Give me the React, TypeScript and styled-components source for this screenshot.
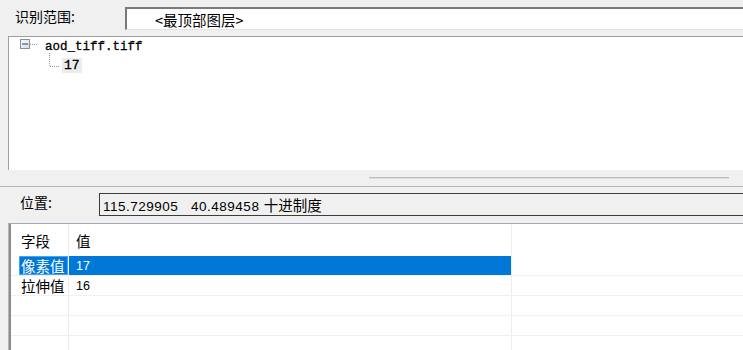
import React from "react";
import styled, { createGlobalStyle } from "styled-components";

const GlobalStyle = createGlobalStyle`
  html, body {
    margin: 0;
    padding: 0;
    background: #f0f0f0;
  }
  body {
    font-family: "Noto Sans CJK SC", "Noto Sans", sans-serif;
    color: #000;
  }
`;

const Window = styled.div`
  width: 743px;
  height: 350px;
  overflow: hidden;
  display: flex;
  flex-direction: column;
  background: #f0f0f0;
  & > * {
    flex-shrink: 0;
  }
`;

const TopBar = styled.div`
  height: 36px;
  box-sizing: border-box;
  display: flex;
  align-items: flex-start;
  padding: 7px 0 0 15px;
`;

const FieldLabel = styled.span<{ $w: number }>`
  width: ${(p) => p.$w}px;
  flex: none;
  font-size: 14px;
  line-height: 19px;
  white-space: nowrap;
`;

const Combo = styled.div`
  flex: 1;
  height: 23px;
  box-sizing: border-box;
  border-top: 2px solid #7a7a7a;
  border-left: 2px solid #7a7a7a;
  border-bottom: 1px solid #e3e3e3;
  background: #fff;
  padding-left: 28px;
  font-size: 14.5px;
  line-height: 21px;
  white-space: nowrap;
`;

const TreePanel = styled.div`
  margin-left: 8px;
  height: 134px;
  box-sizing: border-box;
  background: #fff;
  border-top: 1px solid #a0a0a0;
  border-left: 1px solid #a0a0a0;
  padding: 1px 0 0 11px;
`;

const TreeNode = styled.div<{ $indent?: number; $h: number }>`
  display: flex;
  align-items: flex-start;
  height: ${(p) => p.$h}px;
  padding-left: ${(p) => p.$indent ?? 0}px;
`;

const NodeText = styled.span`
  font-family: "Liberation Mono", "DejaVu Sans Mono", monospace;
  font-size: 12.5px;
  line-height: 18px;
  margin-left: 4px;
  white-space: nowrap;
  color: #000;
  -webkit-text-stroke: 0.3px #000;
`;

const LeafText = styled.span`
  font-family: "Liberation Mono", "DejaVu Sans Mono", monospace;
  font-size: 13px;
  line-height: 15px;
  height: 15px;
  margin-top: 5px;
  padding: 0 2px;
  background: #ececec;
  -webkit-text-stroke: 0.3px #000;
`;

const SplitterRow = styled.div`
  height: 16px;
  box-sizing: border-box;
  display: flex;
  justify-content: flex-end;
  align-items: flex-start;
  padding: 7px 14px 0 0;
`;

const Grip = styled.div`
  width: 360px;
  border-top: 1px solid #bdbdbd;
  border-bottom: 1px solid #dedede;
`;

const PositionRow = styled.div`
  height: 37px;
  box-sizing: border-box;
  border-top: 1px solid #b4b4b4;
  display: flex;
  align-items: flex-start;
  padding: 6px 0 0 20px;
`;

const ValueBox = styled.div`
  flex: 1;
  height: 23px;
  box-sizing: border-box;
  border: 1px solid #3c3c3c;
  border-right: none;
  background: #f0f0f0;
  padding-left: 3px;
  font-family: "Liberation Sans", "Noto Sans CJK SC", sans-serif;
  font-size: 13.5px;
  letter-spacing: 0.5px;
  line-height: 21px;
  white-space: pre;
`;

const Cjk = styled.span`
  font-family: "Noto Sans CJK SC", sans-serif;
  font-size: 14.5px;
  letter-spacing: 0;
`;

const Table = styled.div`
  flex: 1 1 auto !important;
  min-height: 0;
  overflow: hidden;
  margin-left: 8px;
  background: #fff;
  border-top: 1px solid #a0a8b8;
  border-left: 1px solid #b8b8b8;
  box-shadow: inset 2px 0 0 #8c8c8c;
  padding-left: 2px;
  display: flex;
  flex-direction: column;
`;

const Row = styled.div<{ $header?: boolean }>`
  flex-shrink: 0;
  display: grid;
  grid-template-columns: 8px 50px 443px 1fr;
  height: ${(p) => (p.$header ? 32 : 20)}px;
  box-sizing: border-box;
  border-bottom: ${(p) => (p.$header ? "none" : "1px solid #f0f0f0")};
`;

const Cell = styled.div<{ $sel?: boolean; $focus?: boolean; $num?: boolean; $last?: boolean }>`
  display: flex;
  align-items: center;
  border-right: ${(p) => (p.$last ? "none" : "1px solid #ededed")};
  background: ${(p) => (p.$sel ? "#0078d7" : "transparent")};
  color: ${(p) => (p.$sel ? "#fff" : "#000")};
  box-shadow: ${(p) => (p.$focus ? "inset 0 0 0 1px #4aa3ec" : "none")};
  padding-left: ${(p) => (p.$num ? 7 : 2)}px;
  font-family: ${(p) =>
    p.$num ? '"Liberation Sans", "Noto Sans CJK SC", sans-serif' : '"Noto Sans CJK SC", sans-serif'};
  font-size: ${(p) => (p.$num ? 12.5 : 14.5)}px;
  white-space: nowrap;
  overflow: hidden;
`;

const HeadCell = styled(Cell)`
  font-family: "Noto Sans CJK SC", sans-serif;
  font-size: 14.5px;
`;

const Gutter = styled.div`
  border: none;
`;

const Expander = () => (
  <svg width="21" height="18" viewBox="0 0 21 18">
    <defs>
      <linearGradient id="exg" x1="0" y1="0" x2="1" y2="1">
        <stop offset="0" stopColor="#ffffff" />
        <stop offset="1" stopColor="#d8d8d8" />
      </linearGradient>
    </defs>
    <rect x="0.5" y="1.5" width="9" height="9" fill="url(#exg)" stroke="#8f8f8f" />
    <line x1="2" y1="6" x2="8" y2="6" stroke="#2d5fb4" strokeWidth="1.2" />
    <line x1="10" y1="6.5" x2="17" y2="6.5" stroke="#9a9a9a" strokeDasharray="1 1" />
  </svg>
);

const Connector = () => (
  <svg width="13" height="20" viewBox="0 0 13 20">
    <line x1="0.5" y1="0" x2="0.5" y2="13" stroke="#9a9a9a" strokeDasharray="1 1" />
    <line x1="1" y1="13.5" x2="11" y2="13.5" stroke="#9a9a9a" strokeDasharray="1 1" />
  </svg>
);

const rows = [
  { field: "像素值", value: "17", sel: true },
  { field: "拉伸值", value: "16", sel: false },
  { field: "", value: "", sel: false },
  { field: "", value: "", sel: false },
  { field: "", value: "", sel: false },
];

export default function App() {
  return (
    <>
      <GlobalStyle />
      <Window>
        <TopBar>
          <FieldLabel $w={110}>识别范围:</FieldLabel>
          <Combo>&lt;最顶部图层&gt;</Combo>
        </TopBar>
        <TreePanel>
          <TreeNode $h={15}>
            <Expander />
            <NodeText>aod_tiff.tiff</NodeText>
          </TreeNode>
          <TreeNode $h={20} $indent={29}>
            <Connector />
            <LeafText>17</LeafText>
          </TreeNode>
        </TreePanel>
        <SplitterRow>
          <Grip />
        </SplitterRow>
        <PositionRow>
          <FieldLabel $w={79}>位置:</FieldLabel>
          <ValueBox>
            {"115.729905   40.489458 "}
            <Cjk>十进制度</Cjk>
          </ValueBox>
        </PositionRow>
        <Table>
          <Row $header>
            <Gutter />
            <HeadCell>字段</HeadCell>
            <HeadCell $num>值</HeadCell>
            <Cell $last />
          </Row>
          {rows.map((r, i) => (
            <Row key={i}>
              <Gutter />
              <Cell $sel={r.sel} $focus={r.sel}>
                {r.field}
              </Cell>
              <Cell $sel={r.sel} $num>
                {r.value}
              </Cell>
              <Cell $last />
            </Row>
          ))}
        </Table>
      </Window>
    </>
  );
}
